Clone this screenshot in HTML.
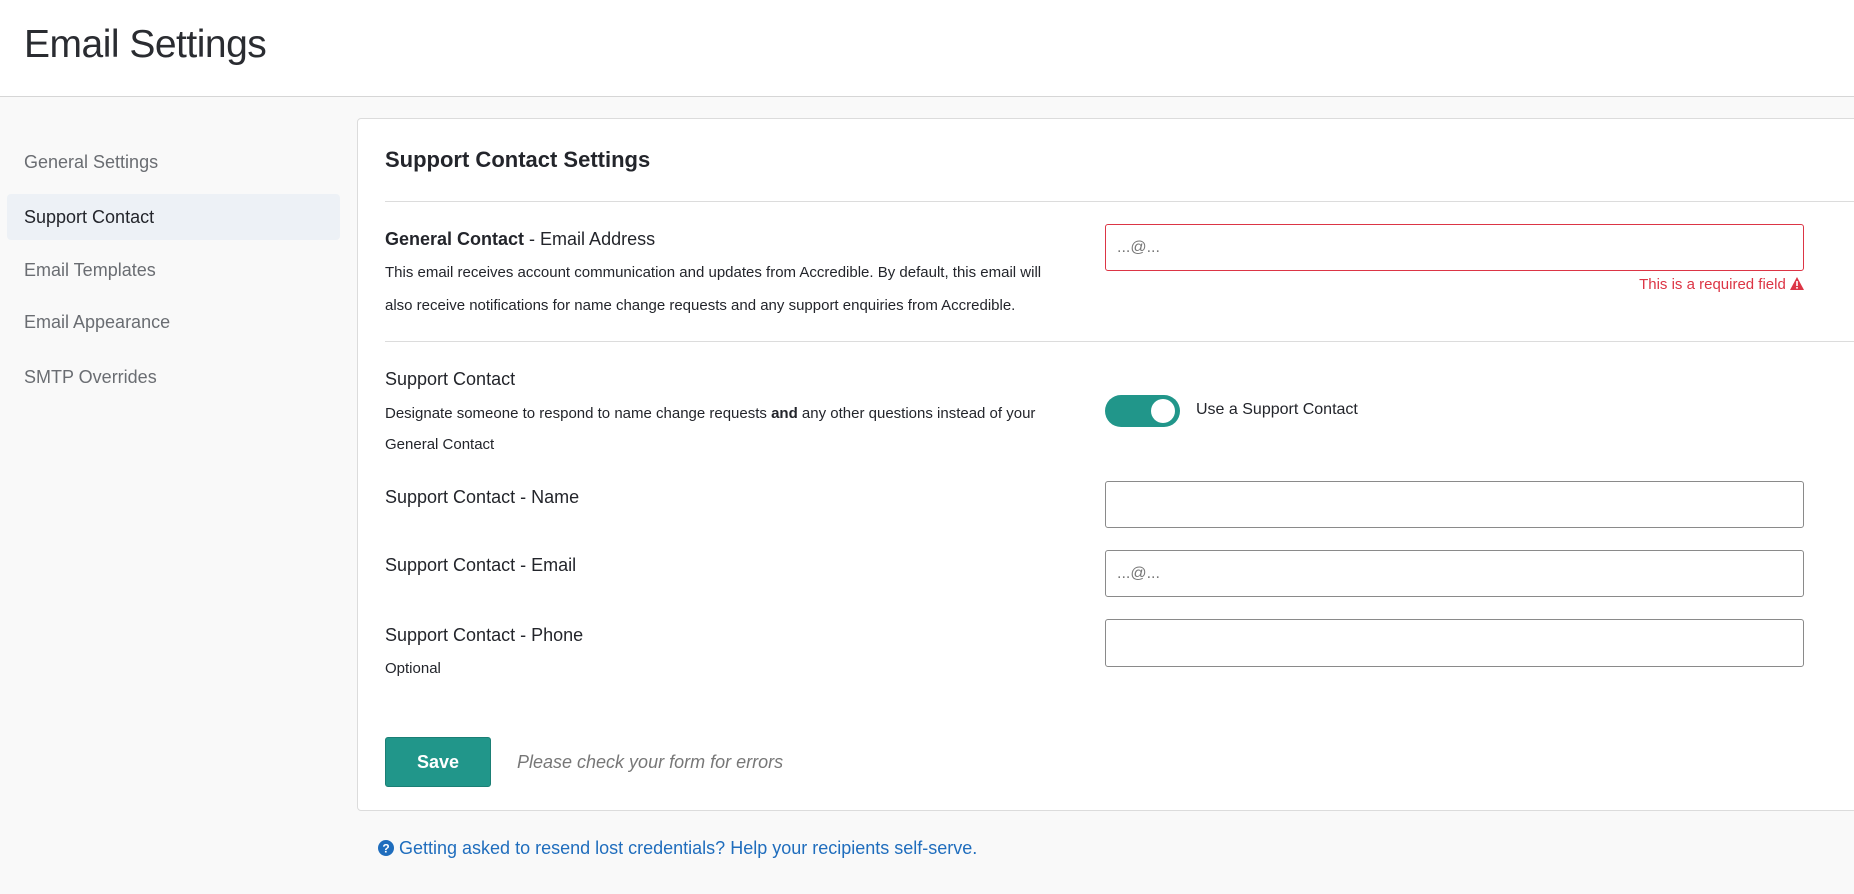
<!DOCTYPE html>
<html><head><meta charset="utf-8">
<style>
*{box-sizing:border-box;margin:0;padding:0}
body{width:1854px;height:894px;overflow:hidden;background:#f9f9f9;font-family:"Liberation Sans",sans-serif;color:#23252b;position:relative}
.hdr{position:absolute;left:0;top:0;width:1854px;height:97px;background:#fff;border-bottom:1px solid #d6d6d6}
.hdr h1{position:absolute;left:24px;top:23px;font-size:39px;font-weight:normal;color:#2a2c31;letter-spacing:-0.5px}
.nav{position:absolute;left:7px;font-size:18px;color:#6a6d72;height:46px;width:333px;padding-left:17px;line-height:46px}
.nav.act{background:#edf1f6;color:#23252b;border-radius:4px}
.panel{position:absolute;left:357px;top:118px;width:1510px;height:693px;background:#fff;border:1px solid #dcdcdc;border-radius:4px}
.a{position:absolute;white-space:nowrap}
.hr{position:absolute;left:385px;width:1469px;height:1px;background:#dcdcdc}
.lbl{font-size:18px;color:#23252b}
.desc{font-size:15px;color:#23252b}
.inp{position:absolute;left:1105px;width:699px;background:#fff;border:1px solid #8a8a8a;border-radius:3px}
.ph{font-size:16px;color:#777;position:absolute;left:11px;top:14px}
</style></head><body>
<div class="hdr"><h1>Email Settings</h1></div>
<div class="nav" style="top:139px">General Settings</div>
<div class="nav act" style="top:194px">Support Contact</div>
<div class="nav" style="top:247px">Email Templates</div>
<div class="nav" style="top:299px">Email Appearance</div>
<div class="nav" style="top:354px">SMTP Overrides</div>
<div class="panel"></div>
<div class="a" style="left:385px;top:147px;font-size:22px;font-weight:bold">Support Contact Settings</div>
<div class="hr" style="top:201px"></div>
<div class="a lbl" style="left:385px;top:229px"><b>General Contact</b> - Email Address</div>
<div class="a desc" style="left:385px;top:264px">This email receives account communication and updates from Accredible. By default, this email will</div>
<div class="a desc" style="left:385px;top:297px">also receive notifications for name change requests and any support enquiries from Accredible.</div>
<div class="inp" style="top:224px;height:47px;border-color:#dc3545"><span class="ph">...@...</span></div>
<div class="a" style="right:50px;top:276px;font-size:15px;color:#dc3545">This is a required field <svg width="14" height="13" viewBox="0 0 14 13" style="vertical-align:-1px"><path d="M7 0L14 13H0z" fill="#dc3545"/><rect x="6.2" y="4" width="1.6" height="5" fill="#fff"/><rect x="6.2" y="10" width="1.6" height="1.6" fill="#fff"/></svg></div>
<div class="hr" style="top:341px"></div>
<div class="a lbl" style="left:385px;top:369px">Support Contact</div>
<div class="a desc" style="left:385px;top:405px">Designate someone to respond to name change requests <b>and</b> any other questions instead of your</div>
<div class="a desc" style="left:385px;top:436px">General Contact</div>
<div class="a" style="left:1105px;top:395px;width:75px;height:32px;background:#21968a;border-radius:16px"><div style="position:absolute;right:5px;top:4px;width:24px;height:24px;border-radius:50%;background:#fff"></div></div>
<div class="a" style="left:1196px;top:401px;font-size:16px">Use a Support Contact</div>
<div class="a lbl" style="left:385px;top:487px">Support Contact - Name</div>
<div class="inp" style="top:481px;height:47px"></div>
<div class="a lbl" style="left:385px;top:555px">Support Contact - Email</div>
<div class="inp" style="top:550px;height:47px"><span class="ph">...@...</span></div>
<div class="a lbl" style="left:385px;top:625px">Support Contact - Phone</div>
<div class="a desc" style="left:385px;top:660px">Optional</div>
<div class="inp" style="top:619px;height:48px"></div>
<div class="a" style="left:385px;top:737px;width:106px;height:50px;background:#21968a;border:1px solid #1b7f75;border-radius:3px;color:#fff;font-size:18px;font-weight:bold;text-align:center;line-height:48px">Save</div>
<div class="a" style="left:517px;top:752px;font-size:18px;font-style:italic;color:#777">Please check your form for errors</div>
<div class="a" style="left:378px;top:838px;font-size:18px;color:#1f6dbd"><svg width="16" height="16" viewBox="0 0 16 16" style="vertical-align:-2px"><circle cx="8" cy="8" r="8" fill="#1f6dbd"/><text x="8" y="12.5" font-size="12" font-weight="bold" fill="#fff" text-anchor="middle" font-family="Liberation Sans">?</text></svg> Getting asked to resend lost credentials? Help your recipients self-serve.</div>
</body></html>
